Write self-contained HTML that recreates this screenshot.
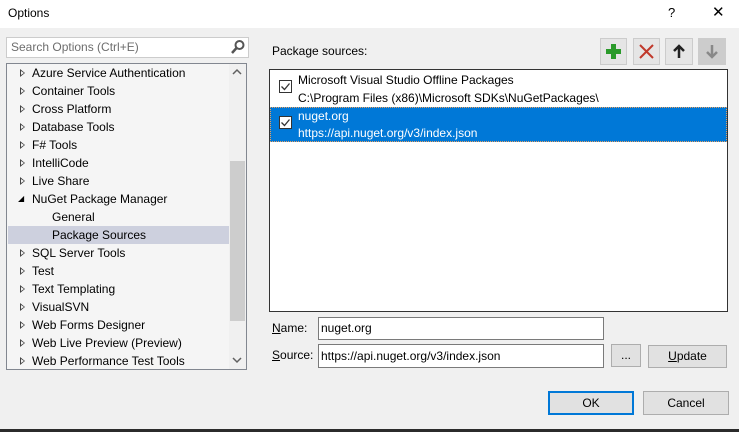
<!DOCTYPE html>
<html><head><style>
*{margin:0;padding:0;box-sizing:border-box}
body{width:739px;height:432px;background:#f0f0f0;font-family:"Liberation Sans",sans-serif;font-size:12px;color:#000;position:relative;overflow:hidden}
.a{position:absolute}
.tree div{position:absolute;left:0;height:18px;line-height:18px;white-space:nowrap}
.tri{position:absolute;left:12px;top:5px;width:0;height:0;border-left:5px solid #444;border-top:4px solid transparent;border-bottom:4px solid transparent}
.tri:after{content:"";position:absolute;left:-4px;top:-2px;border-left:3px solid #f5f5f5;border-top:2px solid transparent;border-bottom:2px solid transparent}
.btn{position:absolute;background:#e1e1e1;border:1px solid #adadad;text-align:center}
.cb{position:absolute;width:13px;height:13px;border:1px solid #333;background:#fff}
</style></head><body>
<div class="a" style="left:0;top:0;width:739px;height:28px;background:#fff"></div>
<div class="a" style="left:8px;top:6px;font-size:12px">Options</div>
<div class="a" style="left:668px;top:5px;font-size:13px">?</div>
<div class="a" style="left:712px;top:3px;font-size:15px">✕</div>

<div class="a" style="left:6px;top:37px;width:243px;height:21px;background:#fff;border:1px solid #ccc"></div>
<div class="a" style="left:11px;top:40px;color:#6d6d6d">Search Options (Ctrl+E)</div>
<svg class="a" style="left:230px;top:39px" width="16" height="16"><circle cx="9.5" cy="6" r="4" fill="none" stroke="#555" stroke-width="2"/><line x1="6.5" y1="9" x2="2" y2="14" stroke="#555" stroke-width="2.5"/></svg>

<div class="a" style="left:6px;top:63px;width:241px;height:307px;background:#f5f5f5;border:1px solid #828790"></div>
<div class="a" style="left:229px;top:64px;width:17px;height:305px;background:#f0f0f0"></div>
<div class="a" style="left:230px;top:161px;width:15px;height:160px;background:#cdcdcd"></div>
<svg class="a" style="left:232px;top:68px" width="10" height="8"><path d="M1 6l4-4 4 4" stroke="#606060" stroke-width="1.5" fill="none"/></svg>
<svg class="a" style="left:232px;top:356px" width="10" height="8"><path d="M1 2l4 4 4-4" stroke="#606060" stroke-width="1.5" fill="none"/></svg>
<div class="a" style="left:8px;top:226px;width:221px;height:18px;background:#cdd0de"></div>
<div class="a tree" style="left:8px;top:64px;width:221px">
<div style="top:0"><span class="tri"></span><span style="margin-left:24px">Azure Service Authentication</span></div>
<div style="top:18px"><span class="tri"></span><span style="margin-left:24px">Container Tools</span></div>
<div style="top:36px"><span class="tri"></span><span style="margin-left:24px">Cross Platform</span></div>
<div style="top:54px"><span class="tri"></span><span style="margin-left:24px">Database Tools</span></div>
<div style="top:72px"><span class="tri"></span><span style="margin-left:24px">F# Tools</span></div>
<div style="top:90px"><span class="tri"></span><span style="margin-left:24px">IntelliCode</span></div>
<div style="top:108px"><span class="tri"></span><span style="margin-left:24px">Live Share</span></div>
<div style="top:126px"><span style="position:absolute;left:10px;top:0;font-size:8px">◢</span><span style="margin-left:24px">NuGet Package Manager</span></div>
<div style="top:144px"><span style="margin-left:44px">General</span></div>
<div style="top:162px"><span style="margin-left:44px">Package Sources</span></div>
<div style="top:180px"><span class="tri"></span><span style="margin-left:24px">SQL Server Tools</span></div>
<div style="top:198px"><span class="tri"></span><span style="margin-left:24px">Test</span></div>
<div style="top:216px"><span class="tri"></span><span style="margin-left:24px">Text Templating</span></div>
<div style="top:234px"><span class="tri"></span><span style="margin-left:24px">VisualSVN</span></div>
<div style="top:252px"><span class="tri"></span><span style="margin-left:24px">Web Forms Designer</span></div>
<div style="top:270px"><span class="tri"></span><span style="margin-left:24px">Web Live Preview (Preview)</span></div>
<div style="top:288px"><span class="tri"></span><span style="margin-left:24px">Web Performance Test Tools</span></div>
</div>

<div class="a" style="left:272px;top:44px">Package sources:</div>
<div class="btn" style="left:600px;top:38px;width:27px;height:27px;background:#e5e5e5;border-color:#ccc"><svg width="25" height="25"><path d="M12.5 5v15M5 12.5h15" stroke="#2a9a2a" stroke-width="5"/></svg></div>
<div class="btn" style="left:633px;top:38px;width:27px;height:27px;background:#e5e5e5;border-color:#ccc"><svg width="25" height="25"><path d="M6 6l13 13M19 6L6 19" stroke="#c0392b" stroke-width="2"/></svg></div>
<div class="btn" style="left:665px;top:38px;width:28px;height:27px;background:#e5e5e5;border-color:#ccc"><svg width="26" height="25"><path d="M13 19V7M8 12l5-5 5 5" stroke="#222" stroke-width="2.5" fill="none"/></svg></div>
<div class="btn" style="left:698px;top:38px;width:28px;height:27px;background:#ccc;border-color:#ccc"><svg width="26" height="25"><path d="M13 6v12M8 13l5 5 5-5" stroke="#888" stroke-width="2.5" fill="none"/></svg></div>

<div class="a" style="left:269px;top:69px;width:459px;height:243px;background:#fff;border:1px solid #333"></div>
<div class="a" style="left:270px;top:107px;width:457px;height:35px;background:#0078d7;border:1px dotted #e8a060"></div>
<div class="cb" style="left:279px;top:80px"><svg width="11" height="11" style="position:absolute;left:0;top:0"><path d="M1.5 5.5l3 3 5-6" stroke="#333" stroke-width="1.3" fill="none"/></svg></div>
<div class="a" style="left:298px;top:73px">Microsoft Visual Studio Offline Packages</div>
<div class="a" style="left:298px;top:91px">C:\Program Files (x86)\Microsoft SDKs\NuGetPackages\</div>
<div class="cb" style="left:279px;top:116px"><svg width="11" height="11" style="position:absolute;left:0;top:0"><path d="M1.5 5.5l3 3 5-6" stroke="#333" stroke-width="1.3" fill="none"/></svg></div>
<div class="a" style="left:298px;top:109px;color:#fff">nuget.org</div>
<div class="a" style="left:298px;top:126px;color:#fff">https://api.nuget.org/v3/index.json</div>

<div class="a" style="left:272px;top:321px"><u>N</u>ame:</div>
<div class="a" style="left:318px;top:317px;width:286px;height:23px;background:#fff;border:1px solid #7a7a7a;padding:3px 2px">nuget.org</div>
<div class="a" style="left:272px;top:348px"><u>S</u>ource:</div>
<div class="a" style="left:318px;top:344px;width:286px;height:24px;background:#fff;border:1px solid #7a7a7a;padding:4px 2px">https://api.nuget.org/v3/index.json</div>
<div class="btn" style="left:611px;top:344px;width:30px;height:23px;line-height:20px">...</div>
<div class="btn" style="left:648px;top:345px;width:79px;height:23px;line-height:21px"><u>U</u>pdate</div>

<div class="btn" style="left:548px;top:391px;width:86px;height:24px;line-height:20px;border:2px solid #0078d7">OK</div>
<div class="btn" style="left:643px;top:391px;width:86px;height:24px;line-height:22px">Cancel</div>
<div class="a" style="left:0;top:429px;width:739px;height:3px;background:#2b2b2b"></div>
</body></html>
